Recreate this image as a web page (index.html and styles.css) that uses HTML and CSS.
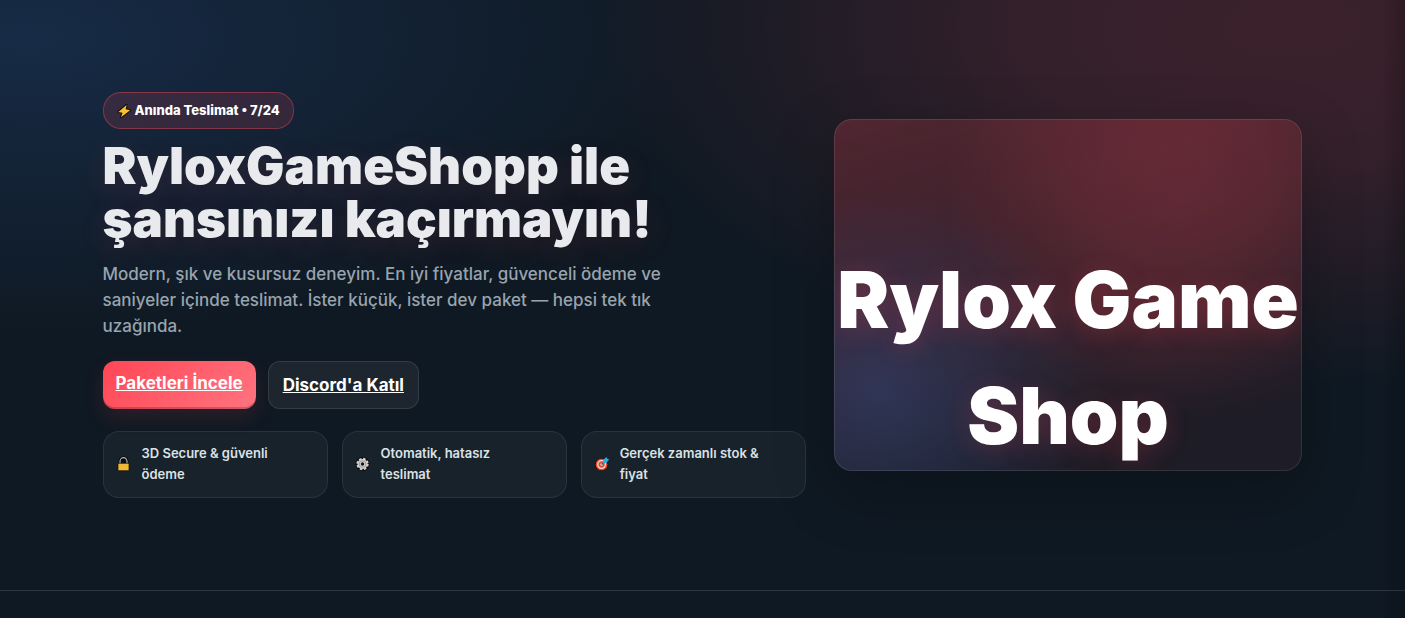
FILE: index.html
```html
<!DOCTYPE html>
<html lang="tr">

  <head>
    <meta charset="utf-8">
    <meta name="viewport" content="width=device-width, initial-scale=1">
    <title>RyloxGameShopp</title>
    <link rel="stylesheet" href="styles.css">
  </head>

  <body>
    <section class="hero">
      <div class="container hero-grid">
        <div class="hero-text">
          <span class="pill">
            <svg class="pill-icon" viewBox="0 0 16 16" aria-hidden="true">
              <path d="M11 1 1.5 9l4.9.9L4.6 15.2 15 7l-5.2-.9z" fill="#fdc02f" stroke="#15130f" stroke-width="2.4" stroke-linejoin="round" paint-order="stroke"/>
            </svg>
            Anında Teslimat • 7/24
          </span>
          <h1>RyloxGameShopp ile şansınızı kaçırmayın!</h1>
          <p class="lead">Modern, şık ve kusursuz deneyim. En iyi fiyatlar, güvenceli ödeme ve saniyeler içinde teslimat. İster küçük, ister dev paket — hepsi tek tık uzağında.</p>

          <div class="cta">
            <a class="btn btn-primary" href="#paketler">Paketleri İncele</a>
            <a class="btn btn-ghost" href="#discord">Discord'a Katıl</a>
          </div>

          <div class="features">
            <div class="feature">
              <svg class="icon" viewBox="0 0 16 16" aria-hidden="true">
                <path d="M4 8V5.5a3.5 3.8 0 0 1 7 0V8" fill="#090c10" stroke="#05080b" stroke-width="3"/>
                <path d="M4 8V5.5a3.5 3.8 0 0 1 7 0V8" fill="none" stroke="#aeb3b8" stroke-width="1.2"/>
                <rect x="2" y="7.3" width="11" height="7.4" rx="1" fill="#edb937" stroke="#110e0a" stroke-width=".7"/>
              </svg>
              <span class="feature-text">3D Secure &amp; güvenli ödeme</span>
            </div>
            <div class="feature">
              <svg class="icon" viewBox="0 0 16 16" aria-hidden="true">
                <circle cx="7.5" cy="8" r="5.4" fill="none" stroke="#080b0e" stroke-width="3.4"/>
                <circle cx="7.5" cy="8" r="5" fill="#d1d1d1"/>
                <circle cx="7.5" cy="8" r="5.2" fill="none" stroke="#d1d1d1" stroke-width="2" stroke-dasharray="2.5 1.58"/>
                <circle cx="7.5" cy="8" r="3.3" fill="none" stroke="#999" stroke-width="1"/>
                <circle cx="7.5" cy="8" r="1.7" fill="#11161b"/>
              </svg>
              <span class="feature-text">Otomatik, hatasız teslimat</span>
            </div>
            <div class="feature">
              <svg class="icon" viewBox="0 0 16 16" aria-hidden="true">
                <circle cx="7.6" cy="8.5" r="6.3" fill="#e8472c" stroke="#100d0c" stroke-width=".8"/>
                <circle cx="7.6" cy="8.5" r="3.8" fill="#e8472c" stroke="#f4dfd8" stroke-width="1.3"/>
                <circle cx="7.6" cy="8.5" r="1.2" fill="#f4dfd8"/>
                <path d="m7.6 8.5 4.2-4.3" stroke="#126798" stroke-width="1.3"/>
                <path d="m9 7.2.3-3.4L12.5 1l.7 1.8 2 .8-3 3.3z" fill="#25afe7"/>
              </svg>
              <span class="feature-text">Gerçek zamanlı stok &amp; fiyat</span>
            </div>
          </div>
        </div>

        <div class="showcase">
          <div class="showcase-title">Rylox Game Shop</div>
        </div>
      </div>
    </section>
  </body>
</html>
```
FILE: styles.css
```css
* {
  box-sizing: border-box;
}

body {
  margin: 0;
  min-height: 100vh;
  font-family: Inter, "Noto Sans", sans-serif;
  font-size: 16px;
  line-height: 26px;
  color: #e8eaed;
  background:
    linear-gradient(to left, rgba(0, 0, 0, .2), transparent 24px),
    radial-gradient(780px 400px at 92% 4%, rgba(255, 70, 85, .19), rgba(255, 70, 85, .15) 35%, transparent 90%),
    radial-gradient(750px 330px at 2% 6%, rgba(45, 95, 170, .26), transparent 90%),
    #0f1923;
}

.hero {
  padding: 92px 24px;
  border-bottom: 1px solid rgba(255, 255, 255, .12);
}

.container {
  max-width: 1200px;
  margin: 0 auto;
}

.hero-grid {
  display: grid;
  grid-template-columns: 3fr 2fr;
  gap: 28px;
  align-items: center;
}

.pill {
  display: inline-flex;
  align-items: center;
  gap: 4px;
  padding: 7px 13px;
  border: 1px solid rgba(255, 70, 85, .4);
  border-radius: 18px;
  background: rgba(255, 70, 85, .14);
  color: #fff;
  font-size: 13px;
  font-weight: 800;
  line-height: 21px;
  vertical-align: top;
}

.pill-icon {
  width: 14px;
  height: 14px;
}

h1 {
  max-width: 640px;
  margin: 10px 0 16px;
  font-size: 51px;
  font-weight: 900;
  line-height: 53px;
  color: #e8eaed;
  text-shadow: 0 8px 30px rgba(255, 70, 85, .14);
}

.lead {
  max-width: 580px;
  margin: 0 0 22px;
  color: #98a4ae;
  font-size: 17px;
  font-weight: 500;
}

.cta {
  display: flex;
  flex-wrap: wrap;
  gap: 12px;
  margin-bottom: 22px;
}

.btn {
  padding: 10px 14px;
  border: 1px solid transparent;
  border-radius: 12px;
  color: #fff;
  font-size: 17px;
  font-weight: 700;
  text-decoration: underline;
}

.btn-primary {
  padding: 9px 13px 13px;
  border: 0;
  background: linear-gradient(135deg, #ff4655, #ff7480);
  box-shadow: inset 0 -2px 0 rgba(0, 0, 0, .2), 0 8px 20px rgba(255, 70, 85, .13);
}

.btn-ghost {
  border-color: rgba(255, 255, 255, .1);
  background: rgba(255, 255, 255, .06);
}

.features {
  display: grid;
  grid-template-columns: repeat(3, 1fr);
  gap: 14px;
}

.feature {
  display: flex;
  align-items: center;
  gap: 10px;
  padding: 11px 12px 12px;
  border: 1px solid rgba(255, 255, 255, .08);
  border-radius: 16px;
  background: rgba(255, 255, 255, .04);
  color: #dce1e5;
  font-size: 13px;
  font-weight: 600;
  line-height: 21px;
}

.feature-text {
  max-width: 150px;
}

.icon {
  flex: none;
  width: 16px;
  height: 16px;
}

.showcase {
  height: 352px;
  padding-top: 122px;
  overflow: hidden;
  border: 1px solid rgba(255, 255, 255, .1);
  border-radius: 18px;
  background:
    radial-gradient(240px 230px at 75% 20%, rgba(255, 70, 85, .2), rgba(255, 70, 85, .16) 35%, transparent),
    radial-gradient(220px 200px at 10% 78%, rgba(60, 110, 200, .28), transparent),
    linear-gradient(165deg, rgba(255, 70, 85, .27), rgba(255, 70, 85, .06) 80%),
    #101a23;
  background-origin: border-box;
  box-shadow: 0 20px 60px rgba(0, 0, 0, .25);
}

.showcase-title {
  color: #fff;
  font-size: 78px;
  font-weight: 900;
  line-height: 116px;
  text-align: center;
  text-shadow: 0 4px 24px rgba(255, 70, 85, .22);
}

@media (max-width: 900px) {
  .hero-grid,
  .features {
    grid-template-columns: 1fr;
  }
}
```
